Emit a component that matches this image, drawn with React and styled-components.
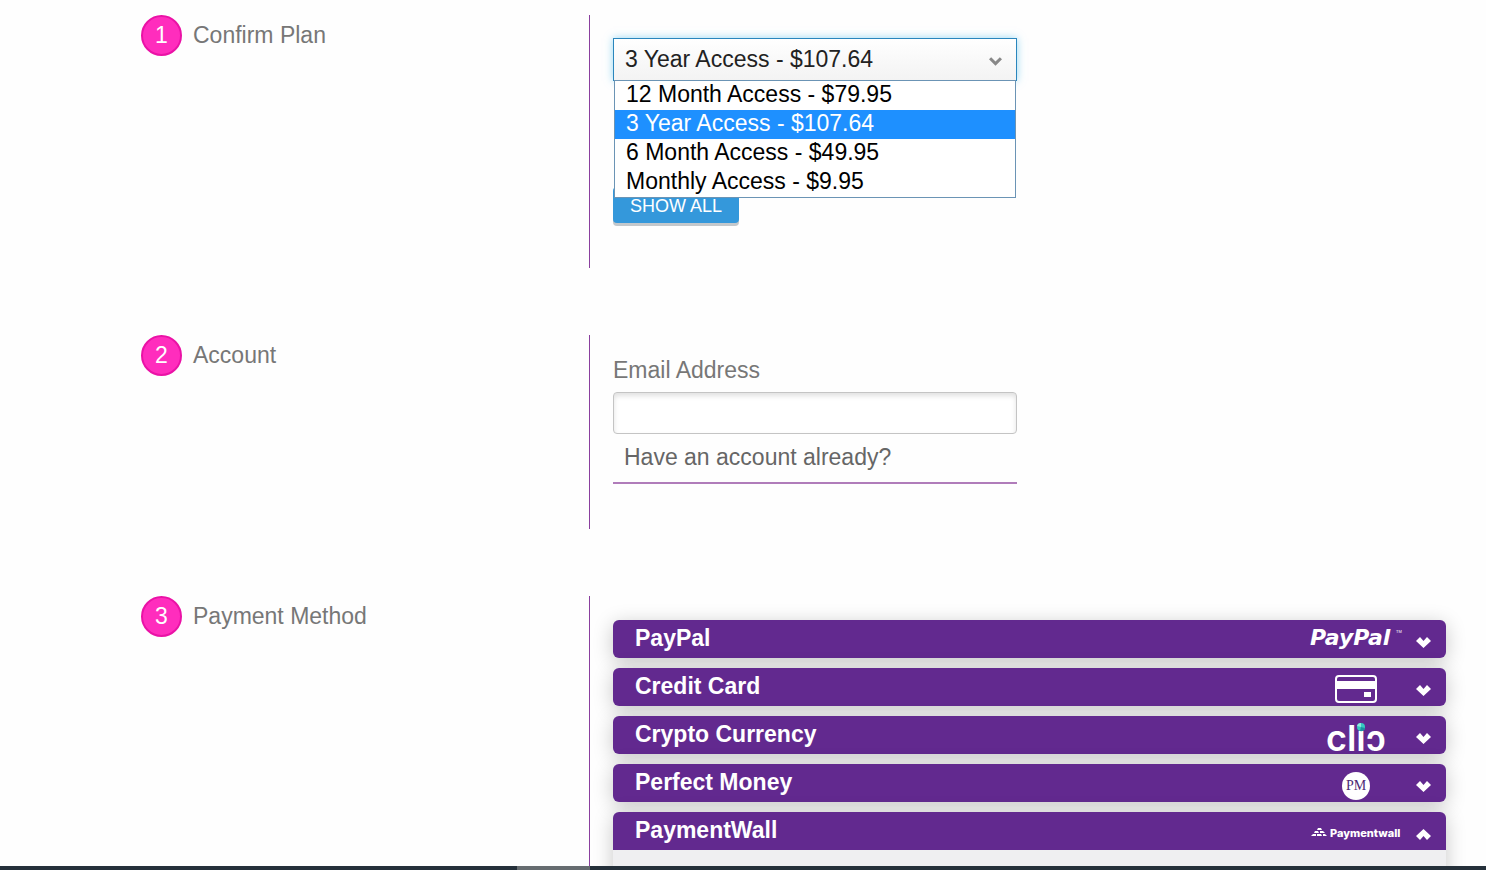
import { useState } from "react";
import styled, { createGlobalStyle } from "styled-components";

const GlobalStyle = createGlobalStyle`
  * {
    box-sizing: border-box;
  }

  body {
    margin: 0;
    background: #fefefe;
    font-family: "Liberation Sans", Arial, sans-serif;
    font-size: 23px;
    color: #777;
  }

  button, select, input {
    font: inherit;
  }
`;

const Page = styled.div`
  height: 100vh;
  display: flex;
  flex-direction: column;
`;

const Steps = styled.main`
  flex: 1;
  min-height: 0;
  overflow: hidden;
  display: flex;
  flex-direction: column;
  gap: 67px;
  padding: 15px 40px 0 141px;
`;

const Step = styled.section`
  flex-shrink: 0;
  display: grid;
  grid-template-columns: 448px 1fr;
`;

const StepHeading = styled.h2`
  display: flex;
  align-items: center;
  align-self: start;
  gap: 11px;
  margin: 0;
  font-size: 23px;
  font-weight: normal;
`;

const StepNumber = styled.span`
  display: flex;
  align-items: center;
  justify-content: center;
  width: 41px;
  height: 41px;
  border: 2px solid #ea12a6;
  border-radius: 50%;
  background: #ff2dbd;
  color: #fff;
`;

const StepBody = styled.div`
  border-left: 1px solid #8a3f9e;
  padding: 22px 0 45px 23px;
`;

const Field = styled.div`
  max-width: 404px;
`;

const SelectBox = styled.div`
  position: relative;
  padding-top: 1px;
`;

const Select = styled.select`
  display: block;
  width: 100%;
  height: 43px;
  padding: 0 11px 2px;
  border: 1px solid #2a86bd;
  border-radius: 0;
  outline: none;
  appearance: none;
  background: linear-gradient(#fff, #f3f3f3);
  box-shadow: 0 0 8px rgba(82, 190, 236, 0.6);
  color: #222;
`;

const SelectArrow = styled.svg`
  position: absolute;
  top: 20px;
  right: 15px;
  pointer-events: none;
`;

const Menu = styled.ul`
  position: absolute;
  top: 43px;
  left: 1px;
  right: 1px;
  z-index: 1;
  margin: 0;
  padding: 0;
  list-style: none;
  border: 1px solid #6b94b5;
  background: #fff;
  color: #000;
`;

const MenuItem = styled.li`
  padding: 0 11px 2px;
  line-height: 27px;
  cursor: default;
  background: ${(props) => (props.$active ? "#1e90ff" : "#fff")};
  color: ${(props) => (props.$active ? "#fff" : "#000")};
`;

const ShowAll = styled.button`
  display: block;
  height: 36px;
  margin-top: 106px;
  padding: 2px 17px 0;
  border: 0;
  border-radius: 4px;
  background: #3498db;
  box-shadow: 0 3px 0 #c3c8cc;
  color: #fff;
  font-size: 18px;
`;

const Label = styled.label`
  display: block;
  margin-bottom: 8px;
  line-height: 27px;
`;

const Input = styled.input`
  display: block;
  width: 100%;
  height: 42px;
  padding: 0 11px;
  border: 1px solid #c4c4c4;
  border-radius: 4px;
  outline: none;
  background: #fff;
  box-shadow: inset 0 3px 5px rgba(0, 0, 0, 0.12);
`;

const AccountLink = styled.a`
  display: block;
  padding: 8px 11px 10px;
  border-bottom: 2px solid #b07cba;
  line-height: 30px;
  color: #666;
  text-decoration: none;
`;

const Methods = styled.div`
  display: flex;
  flex-direction: column;
  gap: 10px;
  padding-top: 2px;
`;

const Method = styled.div`
  border-radius: 6px;
  background: #efeff1;
  box-shadow: 0 4px 20px rgba(0, 0, 0, 0.22);
`;

const MethodHeader = styled.button`
  display: flex;
  align-items: center;
  gap: 15px;
  width: 100%;
  height: 38px;
  padding: 0 15px 0 22px;
  border: 0;
  border-radius: ${(props) => (props.$open ? "6px 6px 0 0" : "6px")};
  background: #62298f;
  color: #fff;
  font-weight: bold;
  text-align: left;
`;

const MethodName = styled.span`
  flex: 1;
  padding-bottom: 2px;
`;

const MethodLogo = styled.span`
  display: flex;
  justify-content: center;
  width: 90px;

  svg {
    overflow: visible;
  }
`;

const MethodPanel = styled.div`
  height: 160px;
`;

const Chevron = styled.svg`
  margin-top: 6px;
  transform: ${(props) => (props.$up ? "rotate(180deg)" : "none")};
`;

const Scrollbar = styled.div`
  display: flex;
  height: 4px;
  background: #25303a;
`;

const ScrollThumb = styled.div`
  width: 73px;
  margin-left: 517px;
  background: #666c70;
`;

const PayPalLogo = () => (
  <svg width="90" height="38" viewBox="0 0 90 38" fill="#fff" aria-hidden="true">
    <text
      x="-1"
      y="25"
      fontFamily="DejaVu Sans, sans-serif"
      fontSize="22"
      fontStyle="italic"
      fontWeight="bold"
    >
      PayPal
    </text>
    <text x="85" y="13" fontFamily="Liberation Sans, sans-serif" fontSize="4" fontWeight="normal">
      TM
    </text>
  </svg>
);

const CardLogo = () => (
  <svg width="42" height="38" viewBox="0 0 42 38" aria-hidden="true">
    <rect x="1" y="8" width="40" height="26" rx="3" fill="none" stroke="#fff" strokeWidth="2" />
    <path d="M1 13h40v8H1zM29 24h7v5h-7z" fill="#fff" />
  </svg>
);

const ClicLogo = () => (
  <svg width="60" height="38" viewBox="0 0 60 38" fill="#fff" aria-hidden="true">
    <text
      x="30"
      y="35"
      textAnchor="middle"
      fontFamily="Inter, Noto Sans, sans-serif"
      fontSize="36"
      fontWeight="600"
    >
      clıɔ
    </text>
    <circle cx="35" cy="11" r="4" fill="#35c9c0" />
    <path d="M35 11l-4-1a4 4 0 0 1 4-3z" fill="#8be9dc" />
    <path d="M35 11l4 1a4 4 0 0 1-5 3z" fill="#1d8fa0" />
  </svg>
);

const PerfectMoneyLogo = () => (
  <svg width="28" height="38" viewBox="0 0 28 38" aria-hidden="true">
    <circle cx="14" cy="22" r="14" fill="#fff" />
    <text
      x="14"
      y="26"
      textAnchor="middle"
      fontFamily="Liberation Serif, serif"
      fontSize="14"
      fontWeight="normal"
      fill="#4c2a74"
    >
      PM
    </text>
  </svg>
);

const PaymentwallLogo = () => (
  <svg width="90" height="38" viewBox="0 0 90 38" fill="#fff" aria-hidden="true">
    <path d="M7 16h3l1 2H6zM4 19h3l1 2H3zM9 19h3l2 2H9zM2 22h3v2H0zM6 22h4l1 2H6zM12 22h2l2 2h-4z" />
    <text x="19" y="25" fontFamily="Inter, sans-serif" fontSize="11" fontWeight="800">
      Paymentwall
    </text>
  </svg>
);

const plans = [
  "12 Month Access - $79.95",
  "3 Year Access - $107.64",
  "6 Month Access - $49.95",
  "Monthly Access - $9.95",
];

const methods = [
  { name: "PayPal", Logo: PayPalLogo },
  { name: "Credit Card", Logo: CardLogo },
  { name: "Crypto Currency", Logo: ClicLogo },
  { name: "Perfect Money", Logo: PerfectMoneyLogo },
  { name: "PaymentWall", Logo: PaymentwallLogo },
];

const App = () => {
  const [plan, setPlan] = useState(plans[1]);
  const [menuOpen, setMenuOpen] = useState(true);
  const [openMethod, setOpenMethod] = useState("PaymentWall");

  const choosePlan = (name) => {
    setPlan(name);
    setMenuOpen(false);
  };

  return (
    <Page>
      <GlobalStyle />
      <Steps>
        <Step>
          <StepHeading>
            <StepNumber>1</StepNumber>
            Confirm Plan
          </StepHeading>
          <StepBody>
            <Field>
              <SelectBox>
                <Select
                  aria-label="Plan"
                  value={plan}
                  onChange={(e) => choosePlan(e.target.value)}
                >
                  {plans.map((name) => (
                    <option key={name}>{name}</option>
                  ))}
                </Select>
                <SelectArrow width="13" height="9" viewBox="0 0 12 8">
                  <path d="M0 2l2-2 4 4 4-4 2 2-6 6z" fill="#888" />
                </SelectArrow>
                {menuOpen && (
                  <Menu role="listbox" aria-label="Plans">
                    {plans.map((name) => (
                      <MenuItem
                        key={name}
                        role="option"
                        aria-selected={name === plan}
                        $active={name === plan}
                        onClick={() => choosePlan(name)}
                      >
                        {name}
                      </MenuItem>
                    ))}
                  </Menu>
                )}
              </SelectBox>
              <ShowAll type="button" onClick={() => setMenuOpen(true)}>
                SHOW ALL
              </ShowAll>
            </Field>
          </StepBody>
        </Step>

        <Step>
          <StepHeading>
            <StepNumber>2</StepNumber>
            Account
          </StepHeading>
          <StepBody>
            <Field>
              <Label htmlFor="email">Email Address</Label>
              <Input id="email" type="email" />
              <AccountLink href="#login">Have an account already?</AccountLink>
            </Field>
          </StepBody>
        </Step>

        <Step>
          <StepHeading>
            <StepNumber>3</StepNumber>
            Payment Method
          </StepHeading>
          <StepBody>
            <Methods>
              {methods.map(({ name, Logo }) => {
                const open = name === openMethod;
                return (
                  <Method key={name}>
                    <MethodHeader
                      type="button"
                      aria-expanded={open}
                      $open={open}
                      onClick={() => setOpenMethod(open ? null : name)}
                    >
                      <MethodName>{name}</MethodName>
                      <MethodLogo>
                        <Logo />
                      </MethodLogo>
                      <Chevron $up={open} width="15" height="11" viewBox="0 0 15 11">
                        <path d="M0 4l4-4 3.500 4 3.500-4 4 4-7.500 7z" fill="#fff" />
                      </Chevron>
                    </MethodHeader>
                    {open && <MethodPanel />}
                  </Method>
                );
              })}
            </Methods>
          </StepBody>
        </Step>
      </Steps>
      <Scrollbar>
        <ScrollThumb />
      </Scrollbar>
    </Page>
  );
};

export default App;
